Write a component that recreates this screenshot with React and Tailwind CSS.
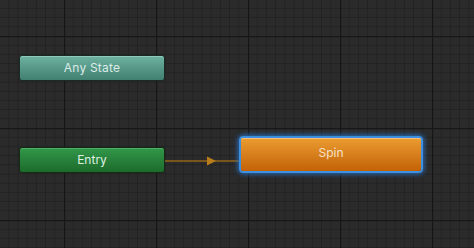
import React from "react";

function Grid() {
  const minor = [];
  for (let i = 1; i < 10; i++) {
    const p = i * 9.2;
    minor.push(<line key={"v" + i} x1={p} y1={0} x2={p} y2={92} stroke="#222222" strokeWidth="1" />);
    minor.push(<line key={"h" + i} x1={0} y1={p} x2={92} y2={p} stroke="#222222" strokeWidth="1" />);
  }
  return (
    <svg className="absolute inset-0 w-full h-full" width="474" height="248">
      <defs>
        <pattern id="grid" x="64" y="36" width="92" height="92" patternUnits="userSpaceOnUse">
          {minor}
          <line x1="0.5" y1="0" x2="0.5" y2="92" stroke="#171717" strokeWidth="1.5" />
          <line x1="0" y1="0.5" x2="92" y2="0.5" stroke="#171717" strokeWidth="1.5" />
        </pattern>
      </defs>
      <rect width="474" height="248" fill="#2b2b2b" />
      <rect width="474" height="248" fill="url(#grid)" />
    </svg>
  );
}

function Transition() {
  return (
    <svg className="absolute left-[165px] top-[154px]" width="76" height="14">
      <line x1="0" y1="7" x2="76" y2="7" stroke="#94661a" strokeWidth="1.5" />
      <polygon points="42,2.5 51,7 42,11.5" fill="#b97d1c" />
    </svg>
  );
}

export default function App() {
  return (
    <div
      className="relative w-[474px] h-[248px] overflow-hidden bg-[#2b2b2b]"
      style={{ fontFamily: "Inter, 'Noto Sans', sans-serif" }}
    >
      <Grid />

      {/* Any State */}
      <div className="absolute left-[19px] top-[55px] w-[146px] h-[26px] rounded-[3px] border border-[#1c2a26] bg-gradient-to-b from-[#6fb2a2] to-[#3f8070] shadow-[inset_0_1px_0_#8fcabb] flex items-center justify-center">
        <span className="text-[12px] text-[#dcebe6] tracking-[0.2px]">Any State</span>
      </div>

      {/* Entry */}
      <div className="absolute left-[19px] top-[147px] w-[146px] h-[26px] rounded-[3px] border border-[#142a18] bg-gradient-to-b from-[#32984a] to-[#1d6b2b] shadow-[inset_0_1px_0_#4fb064] flex items-center justify-center">
        <span className="text-[12px] text-[#dff0e2]">Entry</span>
      </div>

      <Transition />

      {/* Spin */}
      <div className="absolute left-[239px] top-[136px] w-[184px] h-[37px] rounded-[4px] border-2 border-[#3d8fe0] shadow-[0_0_5px_1px_#2a6fc0]">
        <div className="w-full h-full rounded-[2px] bg-gradient-to-b from-[#eb9c30] to-[#c36204] shadow-[inset_0_1px_0_#f2c07a] flex justify-center pt-[6px]">
          <span className="text-[12px] text-[#f6e2c8]">Spin</span>
        </div>
      </div>
    </div>
  );
}
